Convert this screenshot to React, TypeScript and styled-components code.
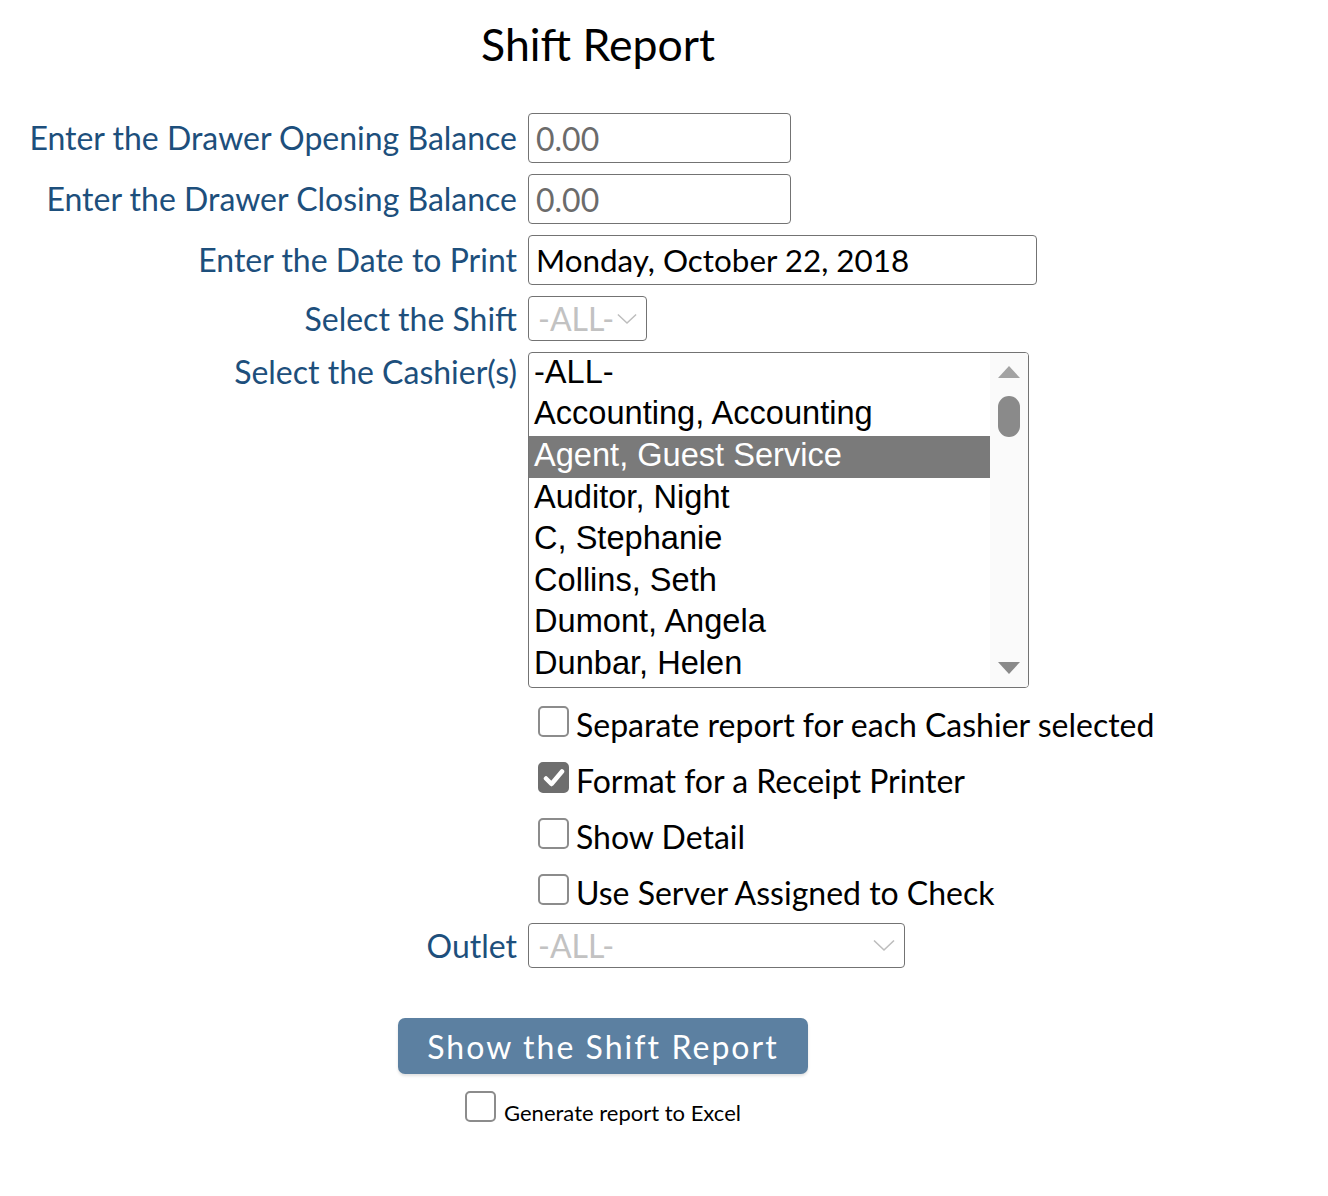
import React from "react";
import styled, { createGlobalStyle } from "styled-components";

const GlobalStyle = createGlobalStyle`
  html, body {
    margin: 0;
    padding: 0;
    background: #ffffff;
    font-family: Lato, "Open Sans", sans-serif;
  }
`;

const Page = styled.div`
  width: 1196px;
  padding-top: 18px;
  padding-bottom: 40px;
`;

const Title = styled.h1`
  margin: 0 0 43px;
  text-align: center;
  font-family: Lato, sans-serif;
  font-weight: 400;
  font-size: 44.6px;
  line-height: 52px;
  color: #000;
`;

const Form = styled.div`
  display: grid;
  grid-template-columns: 517px auto;
  column-gap: 11px;
  row-gap: 11px;
  justify-items: start;
  align-items: center;
`;

const Label = styled.div<{ $top?: boolean }>`
  justify-self: end;
  align-self: ${(p) => (p.$top ? "start" : "center")};
  font-size: 32px;
  line-height: 40px;
  color: #1d4f7c;
  white-space: nowrap;
`;

const Spacer = styled.div``;

const TextInput = styled.input<{ $wide?: boolean; $dark?: boolean }>`
  box-sizing: border-box;
  width: ${(p) => (p.$wide ? "509px" : "263px")};
  height: 50px;
  margin: 0;
  padding: 0 7px;
  border: 1.5px solid #737373;
  border-radius: 4px;
  font-family: Lato, sans-serif;
  font-size: ${(p) => (p.$dark ? "31.4px" : "32px")};
  color: ${(p) => (p.$dark ? "#000" : "#6b6b6b")};
  background: #fff;
  outline: none;
`;

const FakeSelect = styled.div<{ $width: number }>`
  box-sizing: border-box;
  width: ${(p) => p.$width}px;
  height: 45px;
  padding: 0 9px 0 9px;
  border: 1.5px solid #737373;
  border-radius: 4px;
  display: flex;
  align-items: center;
  justify-content: space-between;
  font-size: 32px;
  color: #c2c2c2;
  background: #fff;
`;

const ListBox = styled.div`
  box-sizing: border-box;
  width: 501px;
  height: 336px;
  border: 1.5px solid #737373;
  border-radius: 4px;
  display: flex;
  overflow: hidden;
  background: #fff;
`;

const Options = styled.div`
  flex: 1;
  overflow: hidden;
`;

const Option = styled.div<{ $selected?: boolean }>`
  box-sizing: border-box;
  height: 41.6px;
  padding: 0 0 4px 5px;
  display: flex;
  align-items: center;
  font-family: "Liberation Sans", Arial, sans-serif;
  font-size: 32.6px;
  white-space: nowrap;
  color: ${(p) => (p.$selected ? "#fff" : "#000")};
  background: ${(p) => (p.$selected ? "#7a7a7a" : "transparent")};
`;

const ScrollTrack = styled.div`
  width: 38px;
  background: #fafafa;
  display: flex;
  flex-direction: column;
  align-items: center;
  padding: 13px 0 13px;
`;

const Thumb = styled.div`
  width: 22px;
  height: 41px;
  margin-top: 18px;
  border-radius: 11px;
  background: #8a8a8a;
`;

const TrackFill = styled.div`
  flex: 1;
`;

const CheckRow = styled.label`
  display: flex;
  align-items: center;
  gap: 7px;
  height: 45px;
  padding-left: 10px;
  font-size: 32px;
  color: #000;
  white-space: nowrap;
`;

const CheckText = styled.span`
  padding-top: 6px;
`;

const Box = styled.span<{ $checked?: boolean }>`
  box-sizing: border-box;
  width: 31px;
  height: 31px;
  flex: none;
  border: 2px solid ${(p) => (p.$checked ? "#6e6e6e" : "#8c8c8c")};
  border-radius: 5px;
  background: ${(p) => (p.$checked ? "#6e6e6e" : "#fff")};
  display: flex;
  align-items: center;
  justify-content: center;
`;

const Actions = styled.div`
  display: flex;
  flex-direction: column;
  align-items: center;
  padding-left: 10px;
  margin-top: 50px;
`;

const SubmitButton = styled.button`
  box-sizing: border-box;
  width: 410px;
  height: 56px;
  border: none;
  border-radius: 7px;
  background: #5c80a1;
  color: #fff;
  font-family: Lato, sans-serif;
  font-size: 32px;
  letter-spacing: 2.05px;
  box-shadow: 0 2px 3px rgba(0, 0, 0, 0.12);
  cursor: pointer;
`;

const ExcelRow = styled.label`
  display: flex;
  align-items: flex-end;
  gap: 8px;
  margin-top: 17px;
  font-size: 22px;
  line-height: 18px;
  color: #000;
`;

const Chevron = ({ size = 22 }: { size?: number }) => (
  <svg width={size} height={size / 2 + 2} viewBox="0 0 22 13" fill="none">
    <path d="M1 1.5 L11 11 L21 1.5" stroke="#bdbdbd" strokeWidth="1.6" />
  </svg>
);

const Triangle = ({ up, color }: { up?: boolean; color: string }) => (
  <svg width="22" height="12" viewBox="0 0 22 12">
    <path d={up ? "M11 0 L22 12 L0 12 Z" : "M0 0 L22 0 L11 12 Z"} fill={color} />
  </svg>
);

const Check = ({ checked }: { checked?: boolean }) => (
  <Box $checked={checked}>
    {checked && (
      <svg width="22" height="20" viewBox="0 0 22 20">
        <path d="M3 10.5 L8.5 16 L19 3.5" stroke="#fff" strokeWidth="4.5" fill="none" strokeLinecap="round" strokeLinejoin="round" />
      </svg>
    )}
  </Box>
);

const cashiers = [
  "-ALL-",
  "Accounting, Accounting",
  "Agent, Guest Service",
  "Auditor, Night",
  "C, Stephanie",
  "Collins, Seth",
  "Dumont, Angela",
  "Dunbar, Helen",
];

const options = [
  { label: "Separate report for each Cashier selected", checked: false },
  { label: "Format for a Receipt Printer", checked: true },
  { label: "Show Detail", checked: false },
  { label: "Use Server Assigned to Check", checked: false },
];

export default function App() {
  return (
    <Page>
      <GlobalStyle />
      <Title>Shift Report</Title>
      <Form>
        <Label>Enter the Drawer Opening Balance</Label>
        <TextInput defaultValue="0.00" />

        <Label>Enter the Drawer Closing Balance</Label>
        <TextInput defaultValue="0.00" />

        <Label>Enter the Date to Print</Label>
        <TextInput $wide $dark defaultValue="Monday, October 22, 2018" />

        <Label>Select the Shift</Label>
        <FakeSelect $width={119}>
          <span>-ALL-</span>
          <Chevron size={20} />
        </FakeSelect>

        <Label $top>Select the Cashier(s)</Label>
        <ListBox>
          <Options>
            {cashiers.map((c) => (
              <Option key={c} $selected={c === "Agent, Guest Service"}>
                {c}
              </Option>
            ))}
          </Options>
          <ScrollTrack>
            <Triangle up color="#a3a3a3" />
            <Thumb />
            <TrackFill />
            <Triangle color="#8a8a8a" />
          </ScrollTrack>
        </ListBox>

        {options.map((o) => (
          <React.Fragment key={o.label}>
            <Spacer />
            <CheckRow>
              <Check checked={o.checked} />
              <CheckText>{o.label}</CheckText>
            </CheckRow>
          </React.Fragment>
        ))}

        <Label>Outlet</Label>
        <FakeSelect $width={377}>
          <span>-ALL-</span>
          <Chevron />
        </FakeSelect>
      </Form>

      <Actions>
        <SubmitButton>Show the Shift Report</SubmitButton>
        <ExcelRow>
          <Check />
          <span>Generate report to Excel</span>
        </ExcelRow>
      </Actions>
    </Page>
  );
}
